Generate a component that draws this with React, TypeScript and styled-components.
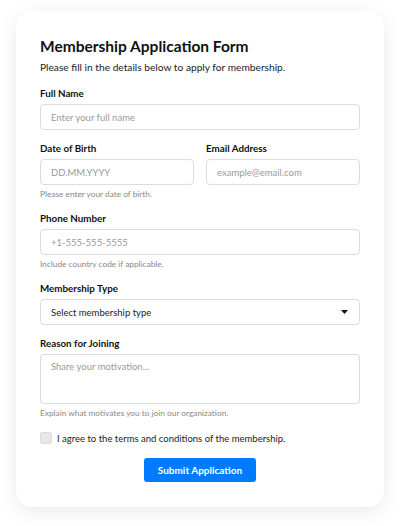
import React from "react";
import styled, { createGlobalStyle } from "styled-components";

const FONT = `Lato, "Noto Sans", sans-serif`;

const Global = createGlobalStyle`
  html, body { margin: 0; padding: 0; background: #ffffff; }
  body { font-family: ${FONT}; }
  * { box-sizing: border-box; }
`;

const Page = styled.div`
  padding: 11px 16px 19px;
`;

const Card = styled.form`
  background: #fff;
  border-radius: 16px;
  box-shadow: 0 4px 20px rgba(0, 0, 0, 0.09);
  padding: 24px 24px 25px;
  display: flex;
  flex-direction: column;
`;

const Title = styled.h1`
  margin: 0;
  font-size: 15.5px;
  line-height: 22px;
  font-weight: 700;
  color: #111;
`;

const Subtitle = styled.p`
  margin: 2px 0 11px;
  font-size: 10.2px;
  line-height: 16px;
  color: #222;
`;

const Row = styled.div`
  display: grid;
  grid-template-columns: 1fr 1fr;
  gap: 12px;
`;

const Group = styled.div`
  display: flex;
  flex-direction: column;
  margin-bottom: 11px;
`;

const Label = styled.label`
  font-size: 9.8px;
  line-height: 14px;
  font-weight: 700;
  color: #111;
  margin-bottom: 4px;
`;

const fieldBase = `
  width: 100%;
  border: 1px solid #dcdcdc;
  border-radius: 4px;
  background: #fff;
  font-family: ${FONT};
  font-size: 9.5px;
  color: #222;
  padding: 0 10px;
  outline: none;
  &::placeholder { color: #9a9a9a; }
`;

const Input = styled.input`
  ${fieldBase}
  height: 26px;
`;

const TextArea = styled.textarea`
  ${fieldBase}
  height: 50px;
  padding-top: 6px;
  resize: none;
  display: block;
`;

const SelectBox = styled.div`
  ${fieldBase}
  height: 26px;
  display: flex;
  align-items: center;
  justify-content: space-between;
  color: #222;
  padding-right: 11px;
`;

const Helper = styled.span`
  margin-top: 3px;
  font-size: 8.3px;
  line-height: 12px;
  color: #888;
`;

const CheckRow = styled.label`
  display: flex;
  align-items: center;
  gap: 5px;
  height: 16px;
  font-size: 9.5px;
  color: #222;
  margin-bottom: 12px;
`;

const Box = styled.span`
  width: 12px;
  height: 12px;
  border-radius: 2px;
  background: #e8e8e8;
  border: 1px solid #dadada;
  flex: none;
`;

const Button = styled.button`
  align-self: center;
  width: 112px;
  height: 24px;
  border: none;
  border-radius: 3px;
  background: #007bff;
  color: #fff;
  font-family: ${FONT};
  font-weight: 700;
  font-size: 10px;
  cursor: pointer;
`;

export default function App() {
  return (
    <>
      <Global />
      <Page>
        <Card onSubmit={(e) => e.preventDefault()}>
          <Title>Membership Application Form</Title>
          <Subtitle>Please fill in the details below to apply for membership.</Subtitle>
          <Group>
            <Label>Full Name</Label>
            <Input placeholder="Enter your full name" />
          </Group>
          <Row>
            <Group>
              <Label>Date of Birth</Label>
              <Input placeholder="DD.MM.YYYY" />
              <Helper>Please enter your date of birth.</Helper>
            </Group>
            <Group>
              <Label>Email Address</Label>
              <Input placeholder="example@email.com" />
            </Group>
          </Row>
          <Group>
            <Label>Phone Number</Label>
            <Input placeholder="+1-555-555-5555" />
            <Helper>Include country code if applicable.</Helper>
          </Group>
          <Group>
            <Label>Membership Type</Label>
            <SelectBox>
              <span>Select membership type</span>
              <svg width="7" height="4" viewBox="0 0 7 4">
                <path d="M0 0 L7 0 L3.5 4 Z" fill="#111" />
              </svg>
            </SelectBox>
          </Group>
          <Group>
            <Label>Reason for Joining</Label>
            <TextArea placeholder="Share your motivation..." />
            <Helper>Explain what motivates you to join our organization.</Helper>
          </Group>
          <CheckRow>
            <Box />
            I agree to the terms and conditions of the membership.
          </CheckRow>
          <Button type="submit">Submit Application</Button>
        </Card>
      </Page>
    </>
  );
}
